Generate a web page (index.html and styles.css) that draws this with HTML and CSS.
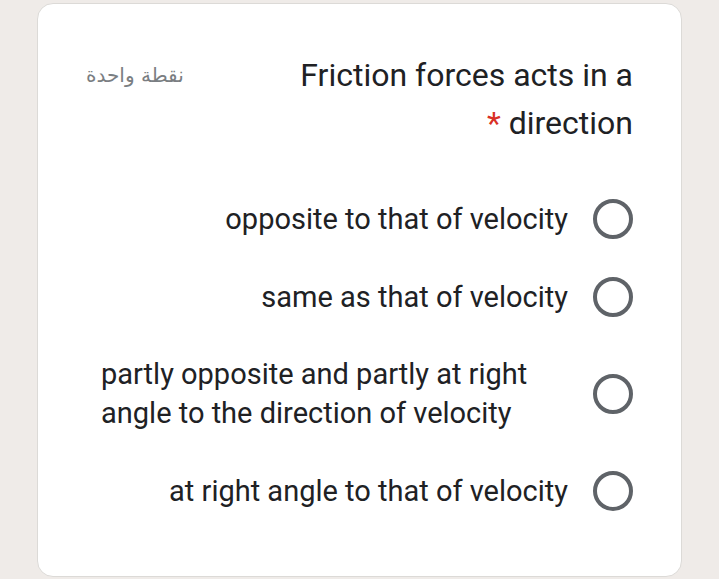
FILE: index.html
```html
<!DOCTYPE html>
<html lang="ar" dir="rtl">
<head>
<meta charset="utf-8">
<title>Form question</title>
<link rel="stylesheet" href="styles.css">
</head>
<body>
<div class="card">
  <div class="header">
    <div class="title">Friction forces acts in a direction <span class="req">*</span></div>
    <div class="points">نقطة واحدة</div>
  </div>
  <div class="options">
    <div class="option"><span class="radio"></span><span class="label" dir="ltr">opposite to that of velocity</span></div>
    <div class="option"><span class="radio"></span><span class="label" dir="ltr">same as that of velocity</span></div>
    <div class="option"><span class="radio"></span><span class="label" dir="ltr">partly opposite and partly at right angle to the direction of velocity</span></div>
    <div class="option"><span class="radio"></span><span class="label" dir="ltr">at right angle to that of velocity</span></div>
  </div>
</div>
</body>
</html>
```
FILE: styles.css
```css
html, body {
  margin: 0;
  padding: 0;
  background: #efebe8;
}
body {
  width: 719px;
  height: 579px;
  overflow: hidden;
  font-family: Roboto, "Noto Sans", sans-serif;
  color: #202124;
}
.card {
  box-sizing: border-box;
  margin: 3px 37px 0 37px;
  height: 574px;
  background: #ffffff;
  border: 1px solid #dcdad7;
  border-radius: 16px;
  padding: 47px 48px 0 48px;
}
.header {
  display: flex;
  justify-content: space-between;
  align-items: flex-start;
}
.title {
  width: 345px;
  font-size: 32px;
  line-height: 48px;
  text-align: right;
}
.req {
  color: #d93025;
}
.points {
  font-family: "DejaVu Sans", "Noto Sans", sans-serif;
  font-size: 20px;
  line-height: 48px;
  color: #7a7e82;
}
.options {
  margin-top: 52px;
  display: flex;
  flex-direction: column;
  gap: 38px;
  padding-left: 15px;
}
.option {
  display: flex;
  align-items: center;
  gap: 25px;
}
.radio {
  flex: none;
  box-sizing: border-box;
  width: 40px;
  height: 40px;
  border: 4px solid #5f6368;
  border-radius: 50%;
}
.label {
  font-size: 29px;
  line-height: 39px;
  text-align: left;
}
```
